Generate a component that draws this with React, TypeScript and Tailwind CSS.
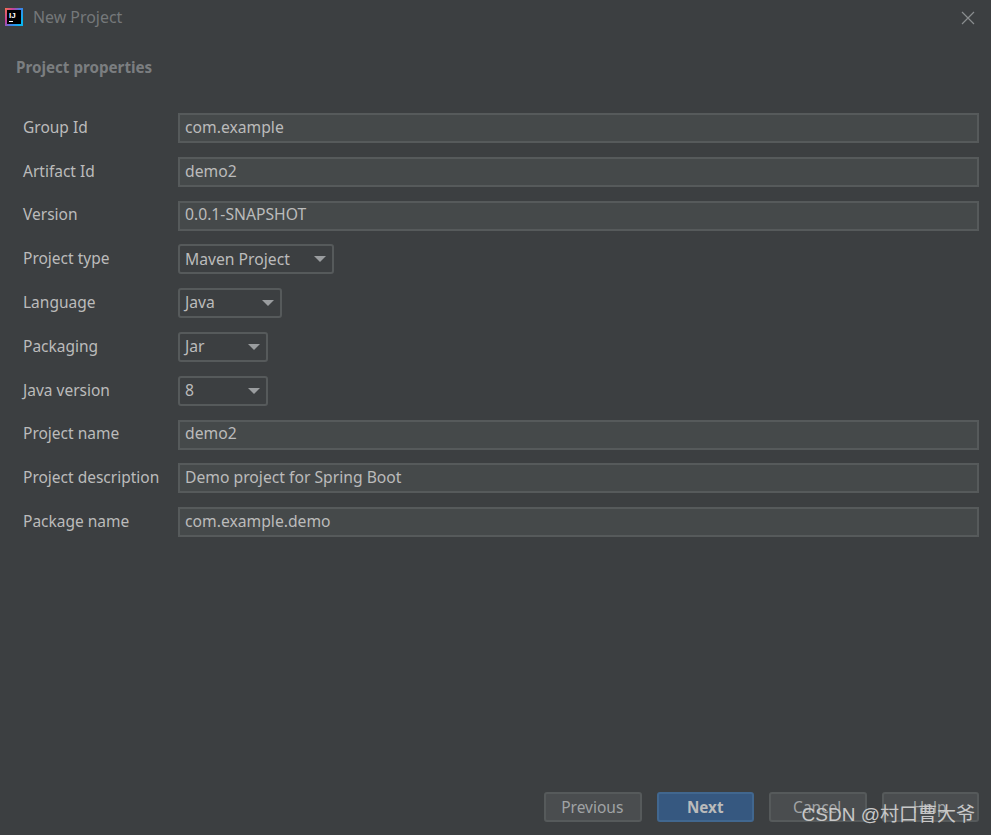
import React from 'react'

const font = { fontFamily: '"Noto Sans", "Noto Sans CJK SC", sans-serif' }

function Logo() {
    return (
        <svg width="18" height="18" viewBox="0 0 18 18" className="shrink-0 -mt-[1px]">
            <defs>
                <linearGradient id="ij" x1="0" y1="0" x2="1" y2="0.6">
                    <stop offset="0" stopColor="#f9734a" />
                    <stop offset="0.35" stopColor="#c43f9c" />
                    <stop offset="0.65" stopColor="#3f7fe8" />
                    <stop offset="1" stopColor="#0ab4f0" />
                </linearGradient>
            </defs>
            <rect width="18" height="18" fill="url(#ij)" />
            <rect x="2" y="2" width="14" height="14" fill="#000000" />
            <text x="4" y="10" fontSize="8" fontWeight="700" fill="#ffffff" fontFamily="Liberation Sans, sans-serif">IJ</text>
            <rect x="4" y="13" width="4" height="1" fill="#ffffff" />
        </svg>
    )
}

function TextRow({ label, value }: { label: string; value: string }) {
    return (
        <div className="flex items-center h-[30px]">
            <div className="w-[155px] shrink-0 pb-[1px] text-[15.5px] text-[#bbbbbb]">{label}</div>
            <div className="flex-1 h-[30px] flex items-center pl-[5px] pb-[1px] bg-[#45494a] border-2 border-[#565a5b] text-[15.7px] text-[#bbbbbb]">
                {value}
            </div>
        </div>
    )
}

function SelectRow({ label, value, width }: { label: string; value: string; width: string }) {
    return (
        <div className="flex items-center h-[30px]">
            <div className="w-[155px] shrink-0 pb-[1px] text-[15.5px] text-[#bbbbbb]">{label}</div>
            <div className={`${width} h-[30px] flex items-center justify-between pl-[5px] pr-[6px] border-2 border-[#565a5b] rounded-[3px] text-[15.7px] text-[#bbbbbb]`}>
                <span>{value}</span>
                <span className="w-0 h-0 border-l-[6px] border-r-[6px] border-t-[6px] border-l-transparent border-r-transparent border-t-[#9a9d9f]" />
            </div>
        </div>
    )
}

function FooterButton({ label, primary }: { label: string; primary?: boolean }) {
    return (
        <div
            className={
                primary
                    ? 'w-[97.5px] h-[30px] flex items-center justify-center rounded-[3px] bg-[#365880] border-2 border-[#41678f] text-[15.2px] font-bold text-[#bbbbbb]'
                    : 'w-[97.5px] h-[30px] flex items-center justify-center pt-[1px] pr-[1px] rounded-[3px] bg-[#4a4d4f] border-2 border-[#565a5b] text-[15.5px] text-[#a0a3a5]'
            }
        >
            {label}
        </div>
    )
}

export default function App() {
    return (
        <div className="relative w-[991px] h-[835px] flex flex-col bg-[#3c3f41] overflow-hidden" style={font}>
            <div className="flex items-center h-[35px] pl-[5px] pr-[16px] shrink-0">
                <Logo />
                <span className="ml-[10px] text-[15.9px] text-[#75787a]">New Project</span>
                <svg width="14" height="14" viewBox="0 0 14 14" className="ml-auto" stroke="#8a8d8f" strokeWidth="1.2">
                    <path d="M1 1l12 12M13 1L1 13" />
                </svg>
            </div>
            <div className="pl-[16px] pt-[22px] h-[78px] shrink-0 text-[15.2px] font-bold leading-[20px] text-[#7b7e80]">Project properties</div>
            <div className="flex flex-col gap-[13.8px] pl-[23px] pr-[12px] flex-1">
                <TextRow label="Group Id" value="com.example" />
                <TextRow label="Artifact Id" value="demo2" />
                <TextRow label="Version" value="0.0.1-SNAPSHOT" />
                <SelectRow label="Project type" value="Maven Project" width="w-[156px]" />
                <SelectRow label="Language" value="Java" width="w-[104px]" />
                <SelectRow label="Packaging" value="Jar" width="w-[90px]" />
                <SelectRow label="Java version" value="8" width="w-[90px]" />
                <TextRow label="Project name" value="demo2" />
                <TextRow label="Project description" value="Demo project for Spring Boot" />
                <TextRow label="Package name" value="com.example.demo" />
            </div>
            <div className="flex justify-end gap-[15px] pr-[12px] pb-[13px] shrink-0">
                <FooterButton label="Previous" />
                <FooterButton label="Next" primary />
                <FooterButton label="Cancel" />
                <FooterButton label="Help" />
            </div>
            <div
                className="absolute right-[16px] bottom-[7px] text-[19px] leading-[26px] text-[#c8c8c8]"
                style={{ fontFamily: '"Liberation Sans", "Noto Sans CJK SC", sans-serif' }}
            >
                CSDN @村口曹大爷
            </div>
        </div>
    )
}
